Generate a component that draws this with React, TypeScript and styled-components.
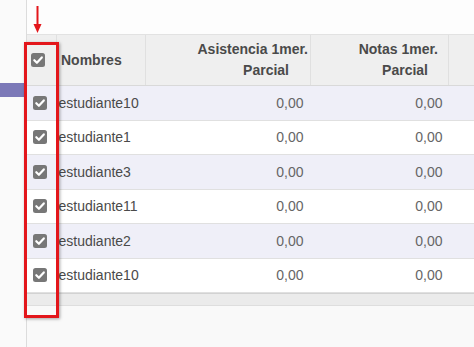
import React from "react";
import styled, { createGlobalStyle } from "styled-components";

const GlobalStyle = createGlobalStyle`
  body {
    margin: 0;
    background: #fbfbfb;
    font-family: "Liberation Sans", Arial, sans-serif;
  }
`;

const Page = styled.div`
  position: relative;
  display: flex;
  width: 474px;
  height: 347px;
  overflow: hidden;
`;

const Sidebar = styled.div`
  width: 26px;
  flex-shrink: 0;
  background: #fafafa;
  border-right: 1px solid #dcdcdc;
`;

const SideItem = styled.div`
  margin-top: 83px;
  width: 24px;
  height: 14px;
  background: #7c79b8;
`;

const Main = styled.div`
  flex: 1;
  display: flex;
  flex-direction: column;
  min-width: 0;
`;

const TopBar = styled.div`
  height: 34px;
  background: #fdfdfd;
  border-bottom: 1px solid #e2e2e2;
`;

const Table = styled.table`
  width: 100%;
  border-collapse: collapse;
  table-layout: fixed;
`;

const Th = styled.th<{ $w?: number; $align?: string }>`
  width: ${(p) => (p.$w ? `${p.$w}px` : "auto")};
  height: 50px;
  padding: 0;
  background: #efefef;
  border-bottom: 1px solid #d9d9d9;
  border-right: 1px solid #e0e0e0;
  text-align: ${(p) => p.$align || "left"};
  font-size: 14px;
  font-weight: 700;
  line-height: 21px;
  color: #4a4a4a;
  vertical-align: middle;
  &:last-child {
    border-right: none;
  }
`;

const HeadLine = styled.span<{ $pad: number; $left?: number }>`
  display: block;
  padding-right: ${(p) => p.$pad}px;
  padding-left: ${(p) => p.$left ?? 0}px;
`;

const Row = styled.tr<{ $odd: boolean }>`
  background: ${(p) => (p.$odd ? "#efeff8" : "#ffffff")};
`;

const Td = styled.td<{ $align?: string; $pad?: number }>`
  height: 33.5px;
  padding: 0 ${(p) => p.$pad ?? 0}px 0 ${(p) => (p.$align === "right" ? 0 : 2)}px;
  border-bottom: 1px solid #e0e0e0;
  text-align: ${(p) => p.$align || "left"};
  font-size: 14px;
  color: ${(p) => (p.$align === "right" ? "#666666" : "#4a4a4a")};
  white-space: nowrap;
  overflow: hidden;
`;

const CheckCell = styled.div`
  display: flex;
  justify-content: flex-start;
  align-items: center;
  padding-left: 4px;
`;

const ScrollBar = styled.div`
  height: 11px;
  background: #ebebeb;
  border-top: 1px solid #d2d2d2;
  border-bottom: 1px solid #dedede;
`;

const Footer = styled.div`
  flex: 1;
  background: #f9f9f9;
`;

const RedBox = styled.div`
  position: absolute;
  left: 24px;
  top: 42px;
  width: 29px;
  height: 270px;
  border: 3px solid #e3161b;
  box-shadow: 1px 1px 3px rgba(0, 0, 0, 0.35);
`;

const Arrow = styled.svg`
  position: absolute;
  left: 32px;
  top: 6px;
`;

const Check = () => (
  <svg width="14" height="14" viewBox="0 0 14 14">
    <rect x="0" y="0" width="14" height="14" rx="2.5" fill="#777777" />
    <path
      d="M3.3 7.2 L5.9 9.8 L10.8 4.4"
      stroke="#ffffff"
      strokeWidth="2.2"
      fill="none"
      strokeLinecap="round"
      strokeLinejoin="round"
    />
  </svg>
);

const rows = [
  "estudiante10",
  "estudiante1",
  "estudiante3",
  "estudiante11",
  "estudiante2",
  "estudiante10",
];

export default function App() {
  return (
    <>
      <GlobalStyle />
      <Page>
        <Sidebar>
          <SideItem />
        </Sidebar>
        <Main>
          <TopBar />
          <Table>
            <thead>
              <tr>
                <Th $w={29}>
                  <CheckCell>
                    <Check />
                  </CheckCell>
                </Th>
                <Th $w={88}>
                  <HeadLine $pad={0} $left={4}>
                    Nombres
                  </HeadLine>
                </Th>
                <Th $w={164} $align="right">
                  <HeadLine $pad={2}>Asistencia 1mer.</HeadLine>
                  <HeadLine $pad={21}>Parcial</HeadLine>
                </Th>
                <Th $w={137} $align="right">
                  <HeadLine $pad={10}>Notas 1mer.</HeadLine>
                  <HeadLine $pad={20}>Parcial</HeadLine>
                </Th>
                <Th />
              </tr>
            </thead>
            <tbody>
              {rows.map((name, i) => (
                <Row key={i} $odd={i % 2 === 0}>
                  <Td>
                    <CheckCell>
                      <Check />
                    </CheckCell>
                  </Td>
                  <Td>{name}</Td>
                  <Td $align="right" $pad={7}>
                    0,00
                  </Td>
                  <Td $align="right" $pad={6}>
                    0,00
                  </Td>
                  <Td />
                </Row>
              ))}
            </tbody>
          </Table>
          <ScrollBar />
          <Footer />
        </Main>
        <RedBox />
        <Arrow width="12" height="28" viewBox="0 0 12 28">
          <line x1="5.5" y1="0" x2="5.5" y2="20" stroke="#e3161b" strokeWidth="2" />
          <polygon points="1.5,18 9.5,18 5.5,27" fill="#e3161b" />
        </Arrow>
      </Page>
    </>
  );
}
